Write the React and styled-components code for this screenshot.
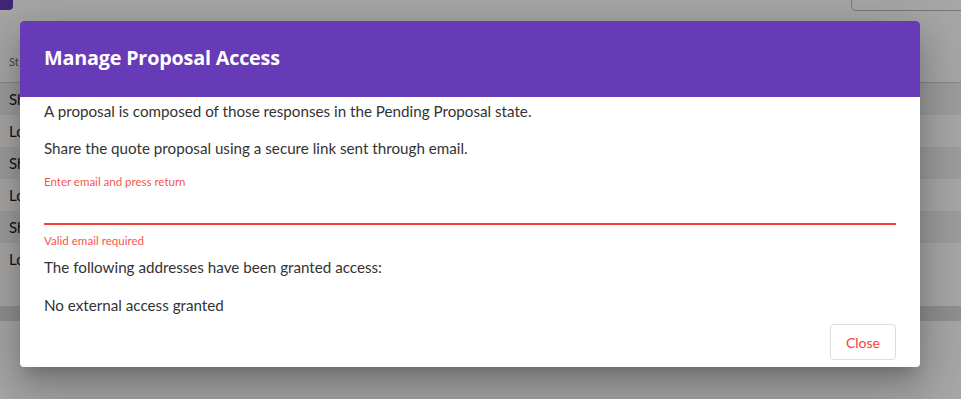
import React from "react";
import styled, { createGlobalStyle } from "styled-components";

const GlobalStyle = createGlobalStyle`
  html, body { margin: 0; padding: 0; background: #fff; }
  body { font-family: Lato, "Liberation Sans", sans-serif; overflow: hidden; }
`;

const Page = styled.div`
  position: relative;
  width: 961px;
  height: 399px;
  overflow: hidden;
  background: #fff;
`;

const TopBar = styled.div`
  display: flex;
  justify-content: space-between;
  height: 41px;
`;

const MenuButton = styled.div`
  width: 13px;
  height: 10px;
  background: #673ab7;
  border-radius: 0 0 4px 0;
`;

const SearchBox = styled.div`
  width: 120px;
  height: 10px;
  margin-right: -12px;
  border: 1px solid #bbb;
  border-top: none;
  border-radius: 0 0 0 5px;
`;

const Table = styled.div`
  display: flex;
  flex-direction: column;
`;

const HeadRow = styled.div`
  height: 41px;
  display: flex;
  align-items: center;
  padding-left: 9px;
  font-size: 11px;
  color: #666;
  border-bottom: 1px solid #ccc;
`;

const Row = styled.div`
  height: 32px;
  display: flex;
  align-items: center;
  padding-left: 9px;
  font-size: 15px;
  color: #222;
  background: ${(p) => (p.$shaded ? "#f0f0f0" : "#fff")};
`;

const Footer = styled.div`
  margin-top: 31px;
  height: 15px;
  background: #dcdcdc;
`;

const Overlay = styled.div`
  position: absolute;
  inset: 0;
  background: rgba(0, 0, 0, 0.35);
  padding: 21px 0 0 20px;
  box-sizing: border-box;
`;

const Modal = styled.div`
  width: 900px;
  height: 346px;
  background: #fff;
  border-radius: 4px;
  overflow: hidden;
  display: flex;
  flex-direction: column;
  box-shadow: 0 11px 15px -7px rgba(0, 0, 0, 0.2), 0 24px 38px 3px rgba(0, 0, 0, 0.14),
    0 9px 46px 8px rgba(0, 0, 0, 0.12);
`;

const Header = styled.div`
  height: 76px;
  flex-shrink: 0;
  background: #673ab7;
  display: flex;
  align-items: center;
  padding-left: 24px;
  padding-bottom: 3px;
  box-sizing: border-box;
`;

const Title = styled.h2`
  margin: 0;
  color: #fff;
  font-family: "Open Sans", "Liberation Sans", sans-serif;
  font-weight: 700;
  font-size: 19.8px;
  letter-spacing: -0.2px;
`;

const Body = styled.div`
  flex: 1;
  padding: 4px 24px 0 24px;
  display: flex;
  flex-direction: column;
`;

const Text = styled.p`
  margin: 0;
  font-size: 15.2px;
  line-height: 20px;
  color: #333;
  margin-top: ${(p) => p.$top || 0}px;
  margin-bottom: ${(p) => p.$gap || 0}px;
`;

const Field = styled.div`
  display: flex;
  flex-direction: column;
  margin-top: 16px;
`;

const FieldLabel = styled.label`
  font-size: 11.5px;
  line-height: 16px;
  color: #f5574b;
`;

const Input = styled.input`
  height: 33px;
  border: none;
  border-bottom: 2px solid #f44336;
  outline: none;
  padding: 0;
  font-family: inherit;
  font-size: 15px;
  background: transparent;
`;

const ErrorText = styled.div`
  margin-top: 9px;
  font-size: 11.6px;
  line-height: 14px;
  color: #f5574b;
`;

const Actions = styled.div`
  display: flex;
  justify-content: flex-end;
  padding: 0 24px 7px 0;
  margin-top: auto;
`;

const CloseButton = styled.button`
  width: 66px;
  height: 36px;
  background: #fff;
  border: 1px solid #ddd;
  border-radius: 4px;
  color: #f44336;
  font-family: Lato, "Liberation Sans", sans-serif;
  font-size: 14px;
  cursor: pointer;
`;

const rows = ["Sh", "Lo", "Sh", "Lo", "Sh", "Lo"];

export default function App() {
  return (
    <>
      <GlobalStyle />
      <Page>
        <TopBar>
          <MenuButton />
          <SearchBox />
        </TopBar>
        <Table>
          <HeadRow>St</HeadRow>
          {rows.map((r, i) => (
            <Row key={i} $shaded={i % 2 === 0}>
              {r}
            </Row>
          ))}
          <Footer />
        </Table>
        <Overlay>
          <Modal role="dialog" aria-labelledby="dlg-title">
            <Header>
              <Title id="dlg-title">Manage Proposal Access</Title>
            </Header>
            <Body>
              <Text $gap={17}>A proposal is composed of those responses in the Pending Proposal state.</Text>
              <Text>Share the quote proposal using a secure link sent through email.</Text>
              <Field>
                <FieldLabel>Enter email and press return</FieldLabel>
                <Input type="email" />
                <ErrorText>Valid email required</ErrorText>
              </Field>
              <Text $top={9} $gap={18}>
                The following addresses have been granted access:
              </Text>
              <Text>No external access granted</Text>
            </Body>
            <Actions>
              <CloseButton>Close</CloseButton>
            </Actions>
          </Modal>
        </Overlay>
      </Page>
    </>
  );
}
